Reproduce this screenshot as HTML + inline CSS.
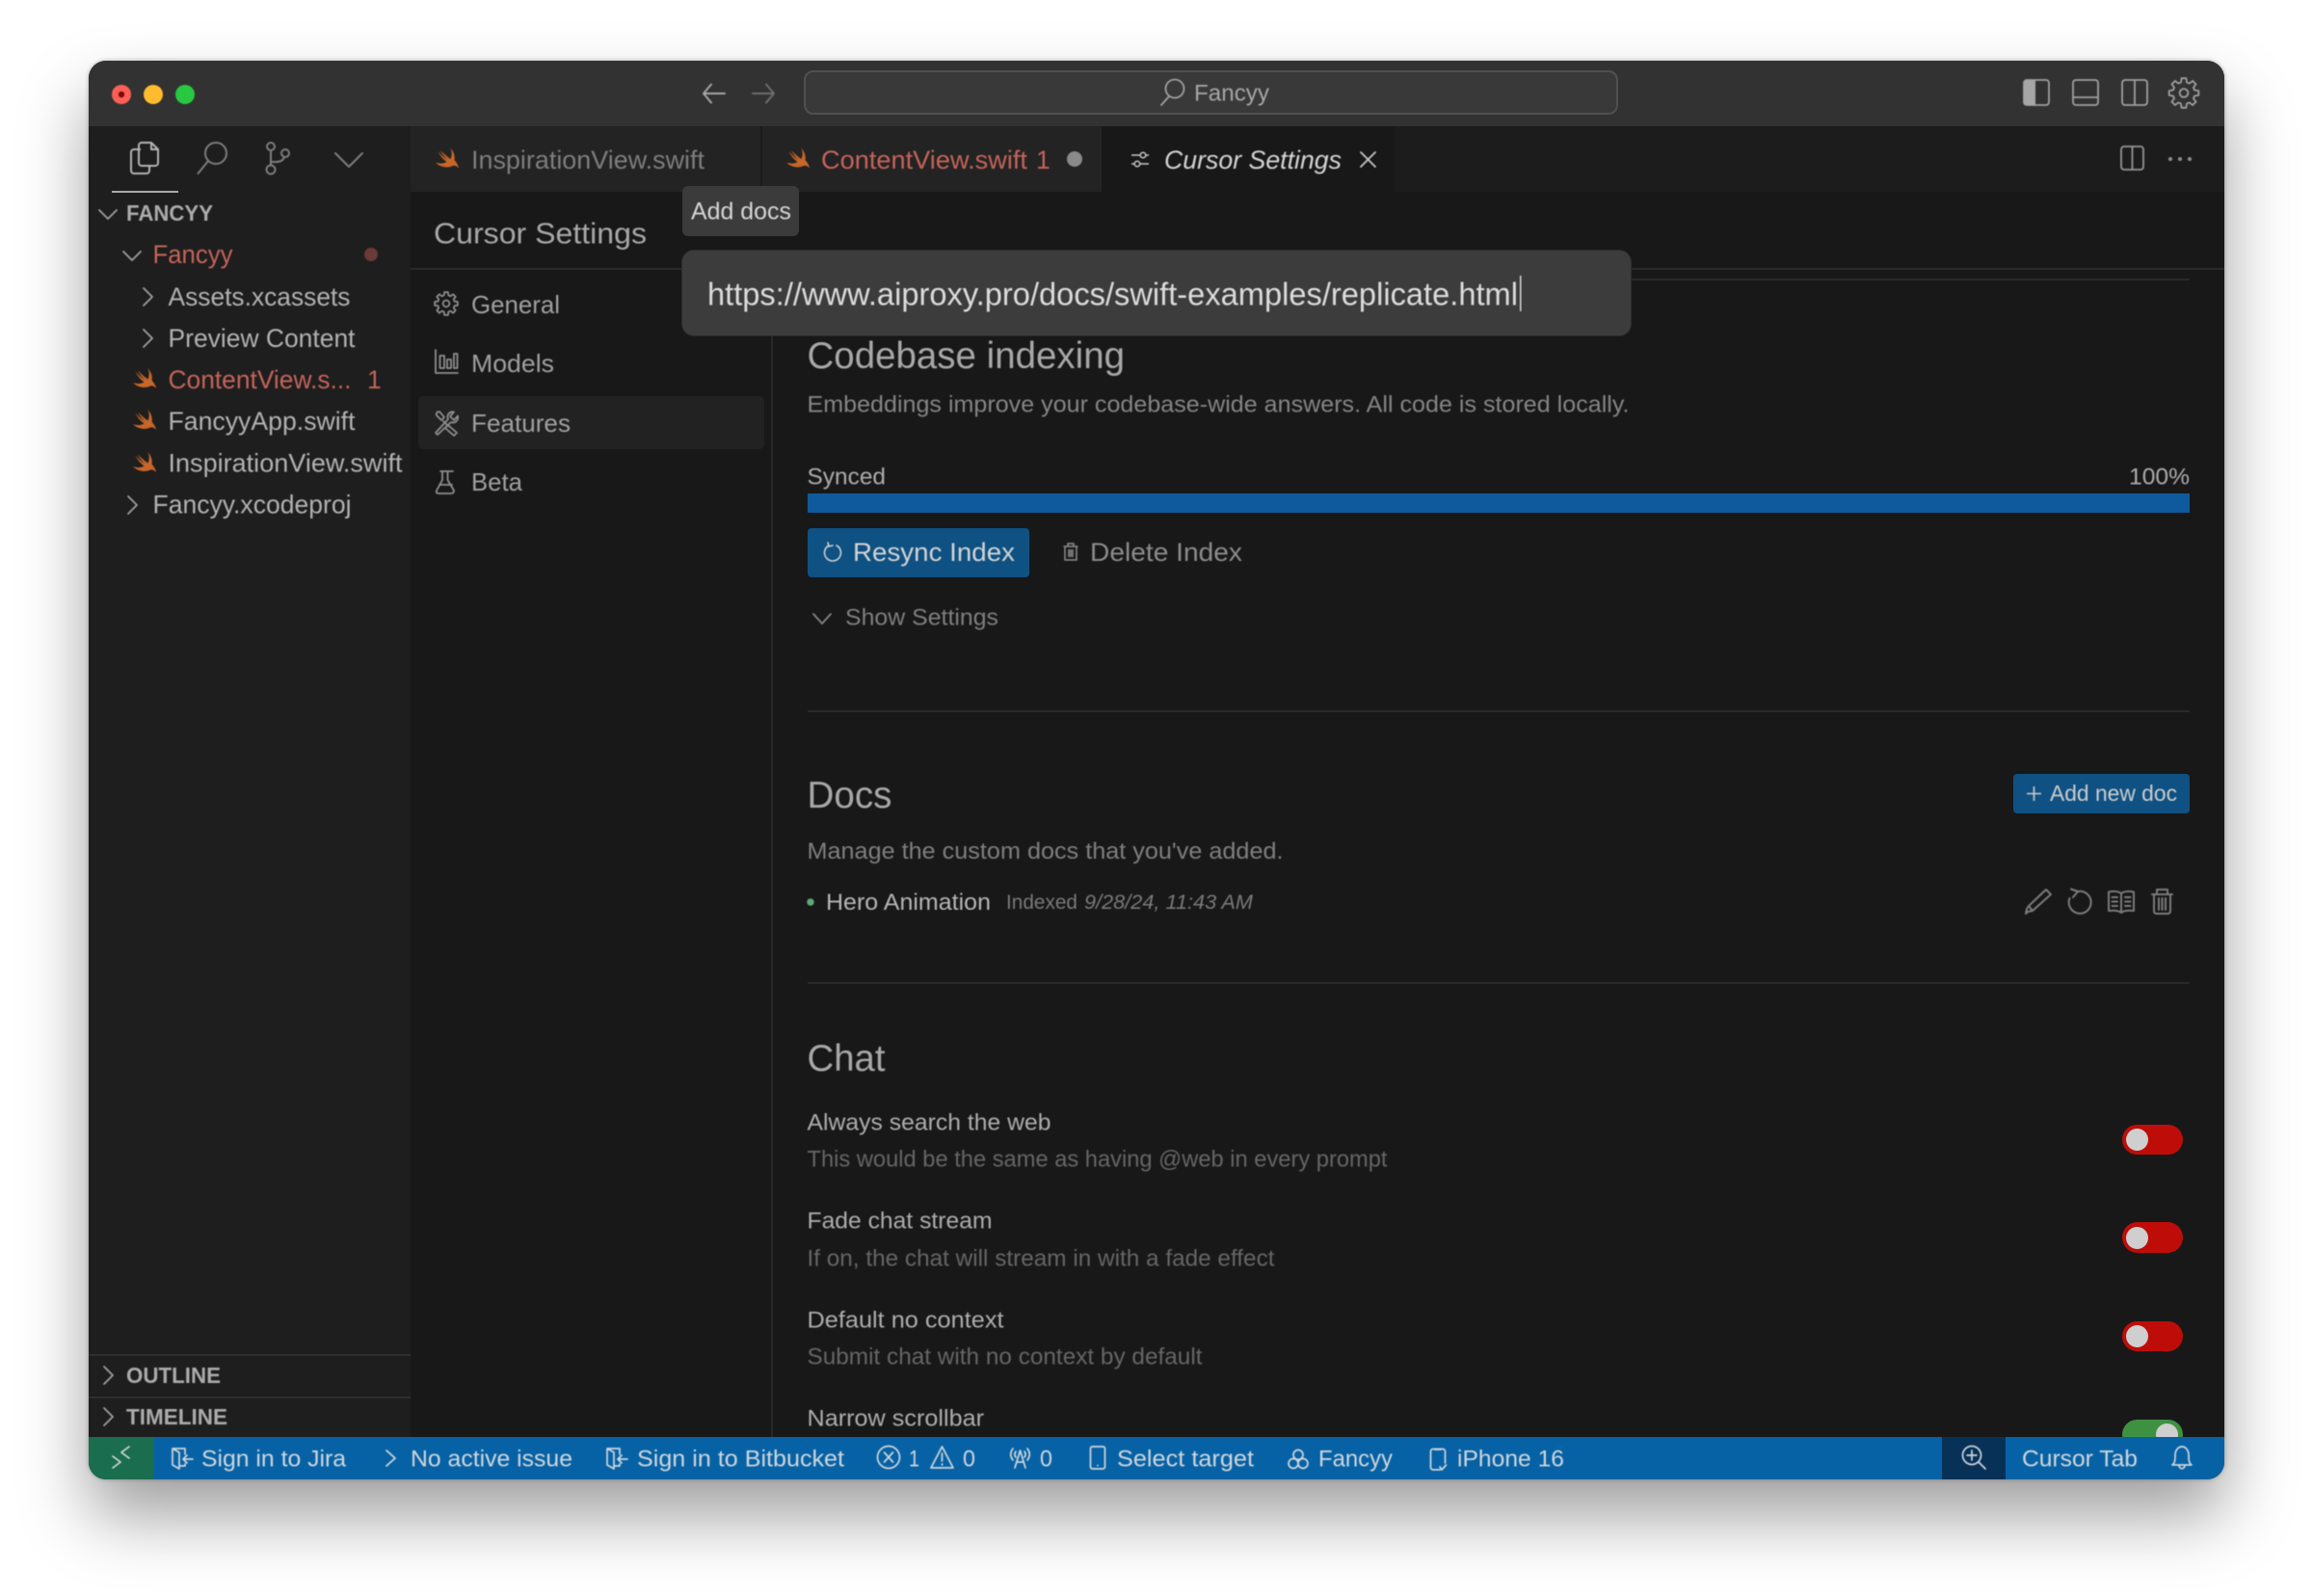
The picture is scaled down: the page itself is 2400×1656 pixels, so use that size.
<!DOCTYPE html>
<html lang="en">
<head>
<meta charset="utf-8">
<title>Cursor Settings</title>
<style>
html,body{margin:0;padding:0;width:2400px;height:1656px;background:#fff;overflow:hidden}
.win{position:absolute;left:92px;top:63px;width:2216px;height:1472px;border-radius:18px;overflow:hidden;background:#181818;box-shadow:0 38px 70px rgba(0,0,0,.38),0 0 4px rgba(0,0,0,.3)}
.b{position:absolute}
svg{position:absolute;left:0;top:0;filter:blur(.4px)}
text{font-family:"Liberation Sans",sans-serif;dominant-baseline:central;white-space:pre}
.s{font-size:26.5px;fill:#b2b2b2}
.r{font-size:26.5px;fill:#c4645a}
.g{font-size:26.5px;fill:#7e7e7e}
.h{font-size:23px;font-weight:700;fill:#ababab}
.st{font-size:24.5px;fill:#cfd6dc}
.m{font-size:26px;fill:#a0a0a0}
.t{font-size:39px;fill:#a8a8a8}
.d{font-size:24.5px;fill:#7f7f7f}
.l{font-size:24.5px;fill:#adadad}
.i{stroke:#8f8f8f;stroke-width:1.8;fill:none;stroke-linecap:round;stroke-linejoin:round}
.a{stroke:#7d7d7d;stroke-width:2;fill:none;stroke-linecap:round;stroke-linejoin:round}
.w{stroke:#cfd6dc;stroke-width:1.7;fill:none;stroke-linecap:round;stroke-linejoin:round}
.c{stroke:#a0a0a0;stroke-width:1.8;fill:none;stroke-linecap:round;stroke-linejoin:round}
</style>
</head>
<body>
<div class="win">
  <div class="b" style="left:0;top:0;width:2216px;height:68px;background:#323232"></div>
  <div class="b" style="left:0;top:68px;width:2216px;height:68px;background:#1c1c1c"></div>
  <div class="b" style="left:334px;top:68px;width:363px;height:68px;background:#232323"></div>
  <div class="b" style="left:697px;top:68px;width:354px;height:68px;background:#232323;border-left:2px solid #1b1b1b;box-sizing:border-box"></div>
  <div class="b" style="left:1051px;top:68px;width:304px;height:68px;background:#181818"></div>
  <div class="b" style="left:0;top:68px;width:334px;height:1360px;background:#1e1e1e"></div>
  <div class="b" style="left:742px;top:10px;width:845px;height:46px;box-sizing:border-box;background:#393939;border:2px solid #505050;border-radius:10px"></div>
  <div class="b" style="left:24px;top:135px;width:69px;height:2px;background:#aaa"></div>
  <div class="b" style="left:0;top:1342px;width:334px;height:2px;background:#2e2e2e"></div>
  <div class="b" style="left:0;top:1386px;width:334px;height:2px;background:#2e2e2e"></div>
  <div class="b" style="left:334px;top:215px;width:1882px;height:2px;background:#292929"></div>
  <div class="b" style="left:745px;top:226px;width:1435px;height:2px;background:#292929"></div>
  <div class="b" style="left:708px;top:216px;width:2px;height:1212px;background:#292929"></div>
  <div class="b" style="left:342px;top:348px;width:359px;height:55px;background:#222;border-radius:5px"></div>
  <div class="b" style="left:746px;top:449px;width:1434px;height:20px;background:#0e5a9c"></div>
  <div class="b" style="left:746px;top:485px;width:230px;height:51px;background:#0e5182;border-radius:4px"></div>
  <div class="b" style="left:746px;top:674px;width:1434px;height:2px;background:#292929"></div>
  <div class="b" style="left:1997px;top:740px;width:183px;height:41px;background:#0e5182;border-radius:4px"></div>
  <div class="b" style="left:746px;top:956px;width:1434px;height:2px;background:#292929"></div>
  <div class="b" style="left:2110px;top:1104px;width:63px;height:31px;background:#be0d09;border-radius:16px"></div>
  <div class="b" style="left:2110px;top:1205px;width:63px;height:32px;background:#be0d09;border-radius:16px"></div>
  <div class="b" style="left:2110px;top:1308px;width:63px;height:31px;background:#be0d09;border-radius:16px"></div>
  <div class="b" style="left:2110px;top:1410px;width:63px;height:31px;background:#3f9142;border-radius:16px"></div>
  <div class="b" style="left:2114px;top:1108px;width:23px;height:23px;background:#cfcfcf;border-radius:50%"></div>
  <div class="b" style="left:2114px;top:1210px;width:23px;height:23px;background:#cfcfcf;border-radius:50%"></div>
  <div class="b" style="left:2114px;top:1312px;width:23px;height:23px;background:#cfcfcf;border-radius:50%"></div>
  <div class="b" style="left:2145px;top:1414px;width:23px;height:23px;background:#cfcfcf;border-radius:50%"></div>
  <div class="b" style="left:0;top:1428px;width:2216px;height:44px;background:#0762a5"></div>
  <div class="b" style="left:0;top:1428px;width:67px;height:44px;background:#1a6d4e"></div>
  <div class="b" style="left:1923px;top:1428px;width:66px;height:44px;background:#073157"></div>
  <div class="b" style="left:616px;top:130px;width:121px;height:52px;background:#3b3b3b;border-radius:6px"></div>
  <div class="b" style="left:615px;top:196px;width:986px;height:90px;box-sizing:border-box;background:#3c3c3c;border:1px solid #2c2c2c;border-radius:13px"></div>
</div>

<svg width="2400" height="1656" viewBox="0 0 2400 1656" xmlns="http://www.w3.org/2000/svg">
<defs>
  <path id="sw" fill="#c8662a" d="M15.500 0C19 4.500 20.500 9 19.500 12.500C21.500 15 23.500 17.500 24 21C22 18.500 20 18 18 18.500C13 21 5 20.500 0 15C4 16.500 8.500 16.500 11.500 14.500C8 12 5 8.500 2.500 3.500C6 7.500 9 10 12.500 12.500C9.500 9.500 7 6.500 5 2.500C9 6.500 12.500 9.500 15.500 11.500C17 8 17 4 15.500 0Z"/>
  <g id="gear"><polygon vector-effect="non-scaling-stroke" points="71.5,-19.2 98.8,-15.6 98.8,15.6 71.5,19.2 64.1,37 80.9,58.8 58.8,80.9 37,64.1 19.2,71.5 15.6,98.8 -15.6,98.8 -19.2,71.5 -37,64.1 -58.8,80.9 -80.9,58.8 -64.1,37 -71.5,19.2 -98.8,15.6 -98.8,-15.6 -71.5,-19.2 -64.1,-37 -80.9,-58.8 -58.8,-80.9 -37,-64.1 -19.2,-71.5 -15.6,-98.8 15.6,-98.8 19.2,-71.5 37,-64.1 58.8,-80.9 80.9,-58.8 64.1,-37"/><circle vector-effect="non-scaling-stroke" r="28"/></g>
  <path id="door" d="M1 1H14V7M14 17V19H8M1 1L8 5V22L1 18ZM22 12H12M16 8L12 12L16 16"/>
</defs>

<!-- traffic lights -->
<circle cx="126" cy="98" r="10" fill="#ff5f57"/><circle cx="126" cy="98" r="3.2" fill="#7a0a06"/>
<circle cx="159" cy="98" r="10" fill="#febc2e"/><circle cx="192" cy="98" r="10" fill="#28c840"/>

<!-- nav arrows -->
<path d="M752 97H730M738 87.5L730 97L738 106.5" stroke="#a6a6a6" stroke-width="2" fill="none" stroke-linecap="round" stroke-linejoin="round"/>
<path d="M781 97H803M795 87.5L803 97L795 106.5" stroke="#6e6e6e" stroke-width="2" fill="none" stroke-linecap="round" stroke-linejoin="round"/>

<!-- command centre -->
<circle cx="1219" cy="92" r="9.5" fill="none" stroke="#a0a0a0" stroke-width="1.8"/><path d="M1213 100L1205 109" stroke="#a0a0a0" stroke-width="1.8" stroke-linecap="round"/>
<text class="m" style="font-size:24px;fill:#a6a6a6" x="1239" y="97" textLength="78" lengthAdjust="spacingAndGlyphs">Fancyy</text>

<!-- top-right layout icons -->
<rect x="2100" y="83" width="26" height="26" rx="3" fill="none" stroke="#a0a0a0" stroke-width="1.8"/><path d="M2100 86a3 3 0 0 1 3-3h9v26h-9a3 3 0 0 1-3-3z" fill="#a6a6a6"/>
<rect x="2151" y="83" width="26" height="26" rx="3" fill="none" stroke="#a0a0a0" stroke-width="1.8"/><path d="M2151 101H2177" stroke="#a0a0a0" stroke-width="1.8"/>
<rect x="2202" y="83" width="26" height="26" rx="3" fill="none" stroke="#a0a0a0" stroke-width="1.8"/><path d="M2215 83V109" stroke="#a0a0a0" stroke-width="1.8"/>
<use href="#gear" class="c" transform="translate(2266 96.5) scale(.155)"/>

<!-- activity icons -->
<path d="M146 155H139a3 3 0 0 0-3 3V177a3 3 0 0 0 3 3H152a3 3 0 0 0 3-3V172" fill="none" stroke="#b4b4b4" stroke-width="2" stroke-linejoin="round"/>
<path d="M147 148H157L164 155V169a3 3 0 0 1-3 3H147a3 3 0 0 1-3-3V151a3 3 0 0 1 3-3ZM157 148V155H164" fill="none" stroke="#b4b4b4" stroke-width="2" stroke-linejoin="round"/>
<circle cx="224" cy="159" r="11" class="a"/><path class="a" d="M216 167L205.5 180"/>
<circle cx="281" cy="152" r="4" class="a"/><circle cx="281" cy="176" r="4.5" class="a"/><circle cx="296" cy="159" r="4" class="a"/>
<path class="a" d="M281 156V171M281 168H286C291 168 294 166 295 163"/>
<path class="a" d="M348 159L362 173L376 159"/>

<!-- tabs -->
<use href="#sw" transform="translate(452 153.5)"/>
<text class="g" x="489" y="166" textLength="242" lengthAdjust="spacingAndGlyphs">InspirationView.swift</text>
<use href="#sw" transform="translate(816 153.5)"/>
<text class="r" x="852" y="166" textLength="214" lengthAdjust="spacingAndGlyphs">ContentView.swift</text>
<text class="r" x="1075" y="166">1</text>
<circle cx="1115" cy="165" r="8" fill="#8a8a8a"/>
<path d="M1174 161H1183M1189 161H1192M1174 170H1177M1183 170H1192" stroke="#c8c8c8" stroke-width="1.6" fill="none"/>
<circle cx="1186" cy="161" r="2.8" fill="none" stroke="#c8c8c8" stroke-width="1.5"/><circle cx="1180" cy="170" r="2.8" fill="none" stroke="#c8c8c8" stroke-width="1.5"/>
<text style="font-size:26.5px;font-style:italic;fill:#d4d4d4" x="1208" y="166" textLength="184" lengthAdjust="spacingAndGlyphs">Cursor Settings</text>
<path d="M1412 158L1427 173M1427 158L1412 173" stroke="#c8c8c8" stroke-width="1.8" stroke-linecap="round"/>
<rect x="2201" y="152" width="23" height="24" rx="3" fill="none" stroke="#969696" stroke-width="1.8"/><path d="M2212.5 152V176" stroke="#969696" stroke-width="1.8"/>
<circle cx="2252" cy="165" r="2" fill="#909090"/><circle cx="2262" cy="165" r="2" fill="#909090"/><circle cx="2272" cy="165" r="2" fill="#909090"/>

<!-- explorer -->
<path class="c" d="M103 218L112 227L121 218"/>
<text class="h" x="131" y="221" textLength="90" lengthAdjust="spacingAndGlyphs">FANCYY</text>
<path class="c" d="M128 261L137 270L146 261"/>
<text class="r" x="158.500" y="264" textLength="83" lengthAdjust="spacingAndGlyphs">Fancyy</text>
<circle cx="385" cy="264" r="7" fill="#6b3b38"/>
<path class="c" d="M149 299L158 308L149 317"/>
<text class="s" x="174.500" y="308" textLength="189" lengthAdjust="spacingAndGlyphs">Assets.xcassets</text>
<path class="c" d="M149 342L158 351L149 360"/>
<text class="s" x="174.500" y="351" textLength="194" lengthAdjust="spacingAndGlyphs">Preview Content</text>
<use href="#sw" transform="translate(138 382)"/>
<text class="r" x="174.500" y="394" textLength="190" lengthAdjust="spacingAndGlyphs">ContentView.s...</text>
<text class="r" x="381" y="394">1</text>
<use href="#sw" transform="translate(138 425)"/>
<text class="s" x="174.500" y="437" textLength="194" lengthAdjust="spacingAndGlyphs">FancyyApp.swift</text>
<use href="#sw" transform="translate(138 469)"/>
<text class="s" x="174.500" y="480.500" textLength="243" lengthAdjust="spacingAndGlyphs">InspirationView.swift</text>
<path class="c" d="M133 515L142 524L133 533"/>
<text class="s" x="158.500" y="523.500" textLength="206" lengthAdjust="spacingAndGlyphs">Fancyy.xcodeproj</text>
<path class="c" d="M108 1418L117 1427L108 1436"/>
<text class="h" x="131" y="1427" textLength="98" lengthAdjust="spacingAndGlyphs">OUTLINE</text>
<path class="c" d="M108 1461L117 1470L108 1479"/>
<text class="h" x="131" y="1470" textLength="105" lengthAdjust="spacingAndGlyphs">TIMELINE</text>

<!-- settings nav -->
<text x="450" y="242" style="font-size:31px;fill:#a8a8a8" textLength="221" lengthAdjust="spacingAndGlyphs">Cursor Settings</text>
<use href="#gear" class="i" transform="translate(463 315) scale(.12)"/>
<text class="m" x="489" y="316" textLength="92" lengthAdjust="spacingAndGlyphs">General</text>
<path class="i" d="M452 363V387H475M456.500 369H461V382H456.500ZM464 373H468V382H464ZM471 367H474.500V382H471Z"/>
<text class="m" x="489" y="377" textLength="86" lengthAdjust="spacingAndGlyphs">Models</text>
<path class="i" d="M453 431C452 428 455 426 457 428L461 433L458 436ZM460 437L465 442M466 442L474 449L471 452L463 445M454 451L452 449L465 435C463 430 467 426.500 471 427.500L467 432L471 436L475 431.500C476 436 472 440 468 438Z"/>
<text class="m" x="489" y="439" textLength="103" lengthAdjust="spacingAndGlyphs">Features</text>
<path class="i" d="M457 489H470M459 489V498L453 509C452.500 511 453 512 455 512H468C470 512 471 511 471 509L464.500 498V489M456 503H469"/>
<text class="m" x="489" y="500" textLength="53" lengthAdjust="spacingAndGlyphs">Beta</text>

<!-- codebase indexing -->
<text class="t" x="837.500" y="369.500" textLength="329.500" lengthAdjust="spacingAndGlyphs">Codebase indexing</text>
<text class="d" x="837.500" y="420" textLength="853" lengthAdjust="spacingAndGlyphs" style="fill:#858585">Embeddings improve your codebase-wide answers. All code is stored locally.</text>
<text class="l" x="837.500" y="495" textLength="81.500" lengthAdjust="spacingAndGlyphs">Synced</text>
<text class="l" x="2209" y="495" textLength="63" lengthAdjust="spacingAndGlyphs">100%</text>
<path d="M860 566A8.500 8.500 0 1 0 868 566M859 563L860 567L864 566" fill="none" stroke="#d0d0d0" stroke-width="1.6" stroke-linecap="round" stroke-linejoin="round"/>
<text x="885" y="573" style="font-size:27px;fill:#d4d4d4" textLength="168" lengthAdjust="spacingAndGlyphs">Resync Index</text>
<path d="M1103.500 567H1118.500M1108 567V564H1114V567M1105 567V581H1117V567M1109 570V578M1111 570V578M1113 570V578" fill="none" stroke="#8e8e8e" stroke-width="1.5"/>
<text x="1131" y="573" style="font-size:27px;fill:#8c8c8c" textLength="158" lengthAdjust="spacingAndGlyphs">Delete Index</text>
<path d="M844 637L853 647L862 637" fill="none" stroke="#858585" stroke-width="1.8" stroke-linecap="round" stroke-linejoin="round"/>
<text class="d" x="877" y="641" textLength="159" lengthAdjust="spacingAndGlyphs">Show Settings</text>

<!-- docs -->
<text class="t" x="837.500" y="825.500" textLength="88" lengthAdjust="spacingAndGlyphs">Docs</text>
<path d="M2103 823.500H2118M2110.500 816V831" stroke="#cdcdcd" stroke-width="1.6"/>
<text x="2127" y="823" style="font-size:23px;fill:#cdcdcd" textLength="132" lengthAdjust="spacingAndGlyphs">Add new doc</text>
<text class="d" x="837.500" y="883.500" textLength="494" lengthAdjust="spacingAndGlyphs">Manage the custom docs that you've added.</text>
<circle cx="841" cy="936" r="3.800" fill="#5fa878"/>
<text class="l" x="857" y="936.500" style="fill:#b6b6b6" textLength="171" lengthAdjust="spacingAndGlyphs">Hero Animation</text>
<text x="1044" y="936.500" style="font-size:21px;fill:#7a7a7a" textLength="74" lengthAdjust="spacingAndGlyphs">Indexed</text>
<text x="1125" y="936.500" style="font-size:21px;font-style:italic;fill:#7a7a7a" textLength="175" lengthAdjust="spacingAndGlyphs">9/28/24, 11:43 AM</text>
<g fill="none" stroke="#7b7b7b" stroke-width="2" stroke-linejoin="round" stroke-linecap="round">
  <path d="M2123 923L2128 928L2109 945L2104 946L2102 948L2103 943L2105 940ZM2105 940L2109 945"/>
  <path d="M2156 925A11.500 11.500 0 1 1 2147.500 932M2149 922.500L2156 925L2151 931"/>
  <path d="M2201 927C2198 924.500 2192 924.500 2188 925.500V945C2192 944.500 2198 944.500 2201 947C2204 944.500 2210 944.500 2214 945V925.500C2210 924.500 2204 924.500 2201 927ZM2201 927V947M2191.500 931H2197M2191.500 935.500H2197M2191.500 940H2197M2205 931H2210.500M2205 935.500H2210.500M2205 940H2210.500"/>
  <path d="M2233 928H2254M2238 928V923H2249V928M2235 928V945C2235 947 2236 948 2238 948H2249C2251 948 2252 947 2252 945V928M2240 932V944M2243.500 932V944M2247 932V944"/>
</g>

<!-- chat -->
<text class="t" x="837.500" y="1098.500" textLength="81" lengthAdjust="spacingAndGlyphs">Chat</text>
<text class="l" x="837.500" y="1165" textLength="253" lengthAdjust="spacingAndGlyphs">Always search the web</text>
<text class="d" x="837.500" y="1203" style="fill:#666" textLength="602" lengthAdjust="spacingAndGlyphs">This would be the same as having @web in every prompt</text>
<text class="l" x="837.500" y="1267" textLength="192" lengthAdjust="spacingAndGlyphs">Fade chat stream</text>
<text class="d" x="837.500" y="1306" style="fill:#666" textLength="485" lengthAdjust="spacingAndGlyphs">If on, the chat will stream in with a fade effect</text>
<text class="l" x="837.500" y="1370" textLength="204" lengthAdjust="spacingAndGlyphs">Default no context</text>
<text class="d" x="837.500" y="1408" style="fill:#666" textLength="410" lengthAdjust="spacingAndGlyphs">Submit chat with no context by default</text>
<text class="l" x="837.500" y="1472" textLength="183.500" lengthAdjust="spacingAndGlyphs">Narrow scrollbar</text>

<!-- status bar -->
<path class="w" d="M117 1511L125 1517L117 1523M134 1501L126 1507L134 1513"/>
<use href="#door" class="w" transform="translate(178 1502)"/>
<text class="st" x="209" y="1514" textLength="150" lengthAdjust="spacingAndGlyphs">Sign in to Jira</text>
<path class="w" d="M401 1505L410 1513L401 1521"/>
<text class="st" x="426" y="1514" textLength="168" lengthAdjust="spacingAndGlyphs">No active issue</text>
<use href="#door" class="w" transform="translate(629 1502)"/>
<text class="st" x="661" y="1514" textLength="215" lengthAdjust="spacingAndGlyphs">Sign in to Bitbucket</text>
<circle cx="922" cy="1512" r="11.500" class="w"/><path class="w" d="M917.500 1507L926.500 1517M926.500 1507L917.500 1517"/>
<text class="st" x="943" y="1514" textLength="11" lengthAdjust="spacingAndGlyphs">1</text>
<path class="w" d="M977.500 1501L989 1523H966ZM977.500 1508V1516M977.500 1519V1520"/>
<text class="st" x="999" y="1514" textLength="13" lengthAdjust="spacingAndGlyphs">0</text>
<path class="w" d="M1058.500 1505L1053 1523M1058.500 1505L1064 1523M1055 1517H1062M1051 1503C1048 1507 1048 1511 1051 1515M1066 1503C1069 1507 1069 1511 1066 1515M1054 1506C1052.500 1508 1052.500 1510 1054 1512M1063 1506C1064.500 1508 1064.500 1510 1063 1512"/>
<text class="st" x="1079" y="1514" textLength="13" lengthAdjust="spacingAndGlyphs">0</text>
<rect x="1131.500" y="1501" width="15" height="23" rx="2" class="w"/><path class="w" d="M1139 1520.500V1520.600"/>
<text class="st" x="1159" y="1514" textLength="142" lengthAdjust="spacingAndGlyphs">Select target</text>
<circle cx="1347" cy="1509.500" r="5" class="w"/><circle cx="1342" cy="1518.500" r="5" class="w"/><circle cx="1352" cy="1518.500" r="5" class="w"/>
<text class="st" x="1368" y="1514" textLength="77" lengthAdjust="spacingAndGlyphs">Fancyy</text>
<path class="w" d="M1494 1525H1487a2.500 2.500 0 0 1-2.500-2.500V1506a2.500 2.500 0 0 1 2.500-2.500H1497a2.500 2.500 0 0 1 2.500 2.500V1518M1489 1504H1495M1494 1522L1496 1525L1500.500 1520"/>
<text class="st" x="1512" y="1514" textLength="111" lengthAdjust="spacingAndGlyphs">iPhone 16</text>
<circle cx="2046" cy="1510" r="9.500" class="w"/><path class="w" d="M2053 1517L2060 1524M2041 1510H2051M2046 1505V1515"/>
<text class="st" x="2098" y="1514" textLength="120" lengthAdjust="spacingAndGlyphs">Cursor Tab</text>
<path class="w" d="M2254 1520C2257 1518 2257 1514 2257 1510C2257 1505 2260 1501 2264 1501C2268 1501 2271 1505 2271 1510C2271 1514 2271 1518 2274 1520ZM2261 1520C2261 1525 2267 1525 2267 1520"/>

<!-- popups -->
<text x="717" y="219.500" style="font-size:25px;fill:#d6d6d6" textLength="104" lengthAdjust="spacingAndGlyphs">Add docs</text>
<text x="734" y="305" style="font-size:33px;fill:#dcdcdc" textLength="841" lengthAdjust="spacingAndGlyphs">https://www.aiproxy.pro/docs/swift-examples/replicate.html</text>
<rect x="1577" y="286" width="1.500" height="37" fill="#d8d8d8"/>
</svg>
</body>
</html>
